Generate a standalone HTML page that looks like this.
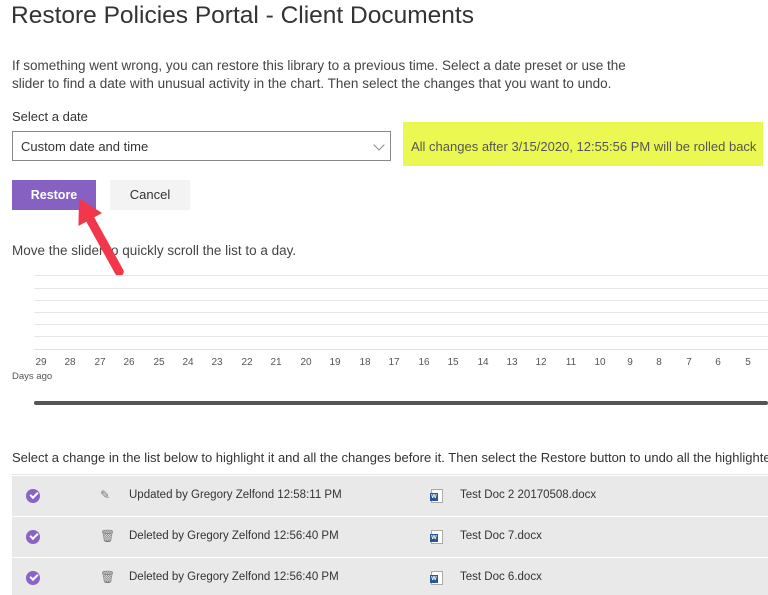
<!DOCTYPE html>
<html><head><style>
html,body{margin:0;width:768px;height:595px;overflow:hidden}
body{background:#fff;font-family:"Liberation Sans",sans-serif;color:#333;position:relative}
.a{position:absolute;white-space:nowrap}
.hl{position:absolute;left:34px;width:734px;height:1px;background:#e6e6e6}
.lbl{position:absolute;top:357px;font-size:10px;color:#555;width:20px;text-align:center}
.row{position:absolute;left:12px;width:756px;height:40px;background:#e9e9e9}
.row .chk{position:absolute;left:14px;top:13px;width:14px;height:14px;border-radius:50%;background:#8a63c6}
.row .chk:after{content:"";position:absolute;left:4px;top:3px;width:6px;height:3px;border-left:2px solid #fff;border-bottom:2px solid #fff;transform:rotate(-45deg)}
.row .t{position:absolute;left:117px;top:13px;font-size:11.5px;color:#333}
.row .f{position:absolute;left:448px;top:13px;font-size:11.5px;color:#333}
.row .w{position:absolute;left:419px;top:13px;width:12px;height:14px;background:#fff;border:1px solid #aaa;box-sizing:border-box}
.row .w:before{content:"w";position:absolute;left:-2px;top:3px;width:8px;height:8px;background:#2b5797;color:#fff;font-size:7px;line-height:8px;text-align:center;font-weight:bold}
.row .ic{position:absolute;left:88px;top:12px;font-size:12px;color:#777}
</style></head><body>
<div class="a" style="left:11px;top:2px;font-size:24.5px;color:#333;font-weight:300">Restore Policies Portal - Client Documents</div>
<div class="a" style="left:12px;top:57px;font-size:13.5px;line-height:18px;color:#444">If something went wrong, you can restore this library to a previous time. Select a date preset or use the<br>slider to find a date with unusual activity in the chart. Then select the changes that you want to undo.</div>
<div class="a" style="left:12px;top:109px;font-size:13px;color:#333">Select a date</div>
<div class="a" style="left:12px;top:131px;width:379px;height:30px;border:1px solid #888;box-sizing:border-box"><span style="position:absolute;left:8px;top:7px;font-size:13px;color:#333">Custom date and time</span><span style="position:absolute;right:7px;top:9px;width:7px;height:7px;border-right:1px solid #888;border-bottom:1px solid #888;transform:rotate(45deg)"></span></div>
<div class="a" style="left:403px;top:122px;width:360px;height:44px;background:#ebf852"><span style="position:absolute;left:8px;top:17px;font-size:13px;color:#555">All changes after 3/15/2020, 12:55:56 PM will be rolled back</span></div>
<div class="a" style="left:12px;top:180px;width:84px;height:30px;background:#8661c1;color:#fff;font-size:12.5px;font-weight:bold;text-align:center;line-height:30px">Restore</div>
<div class="a" style="left:110px;top:180px;width:80px;height:30px;background:#f3f3f3;color:#333;font-size:13px;text-align:center;line-height:30px">Cancel</div>
<div class="a" style="left:12px;top:243px;font-size:13.5px;color:#444">Move the slider to quickly scroll the list to a day.</div>
<svg class="a" style="left:0;top:0" width="768" height="595"><g transform="rotate(61 80 200)"><rect x="96" y="196" width="70" height="9" rx="4" fill="#f2374b"/><polygon points="78,200 102,187 102,214" fill="#f2374b"/></g></svg>
<div class="hl" style="top:275px"></div><div class="hl" style="top:288px"></div><div class="hl" style="top:300px"></div><div class="hl" style="top:312px"></div><div class="hl" style="top:324px"></div><div class="hl" style="top:336px"></div><div class="hl" style="top:349px;background:#dde4ef"></div>
<div class="lbl" style="left:31px">29</div><div class="lbl" style="left:60px">28</div><div class="lbl" style="left:90px">27</div><div class="lbl" style="left:119px">26</div><div class="lbl" style="left:149px">25</div><div class="lbl" style="left:178px">24</div><div class="lbl" style="left:207px">23</div><div class="lbl" style="left:237px">22</div><div class="lbl" style="left:266px">21</div><div class="lbl" style="left:296px">20</div><div class="lbl" style="left:325px">19</div><div class="lbl" style="left:355px">18</div><div class="lbl" style="left:384px">17</div><div class="lbl" style="left:414px">16</div><div class="lbl" style="left:443px">15</div><div class="lbl" style="left:473px">14</div><div class="lbl" style="left:502px">13</div><div class="lbl" style="left:531px">12</div><div class="lbl" style="left:561px">11</div><div class="lbl" style="left:590px">10</div><div class="lbl" style="left:620px">9</div><div class="lbl" style="left:649px">8</div><div class="lbl" style="left:679px">7</div><div class="lbl" style="left:708px">6</div><div class="lbl" style="left:738px">5</div>
<div class="a" style="left:12px;top:371px;font-size:9.5px;color:#555">Days ago</div>
<div class="a" style="left:34px;top:401px;width:734px;height:4px;background:#555;border-radius:2px"></div>
<div class="a" style="left:12px;top:450px;width:756px;overflow:hidden;font-size:13px;color:#333">Select a change in the list below to highlight it and all the changes before it. Then select the Restore button to undo all the highlighted changes.</div>
<div class="a" style="left:12px;top:474px;width:756px;height:1px;background:#e6e6e6"></div>
<div class="row" style="top:476px"><div class="chk"></div><div class="ic">✎</div><div class="t">Updated by Gregory Zelfond 12:58:11 PM</div><div class="w"></div><div class="f">Test Doc 2 20170508.docx</div></div>
<div class="row" style="top:517px"><div class="chk"></div><div class="ic">🗑</div><div class="t">Deleted by Gregory Zelfond 12:56:40 PM</div><div class="w"></div><div class="f">Test Doc 7.docx</div></div>
<div class="row" style="top:558px"><div class="chk"></div><div class="ic">🗑</div><div class="t">Deleted by Gregory Zelfond 12:56:40 PM</div><div class="w"></div><div class="f">Test Doc 6.docx</div></div>
</body></html>
